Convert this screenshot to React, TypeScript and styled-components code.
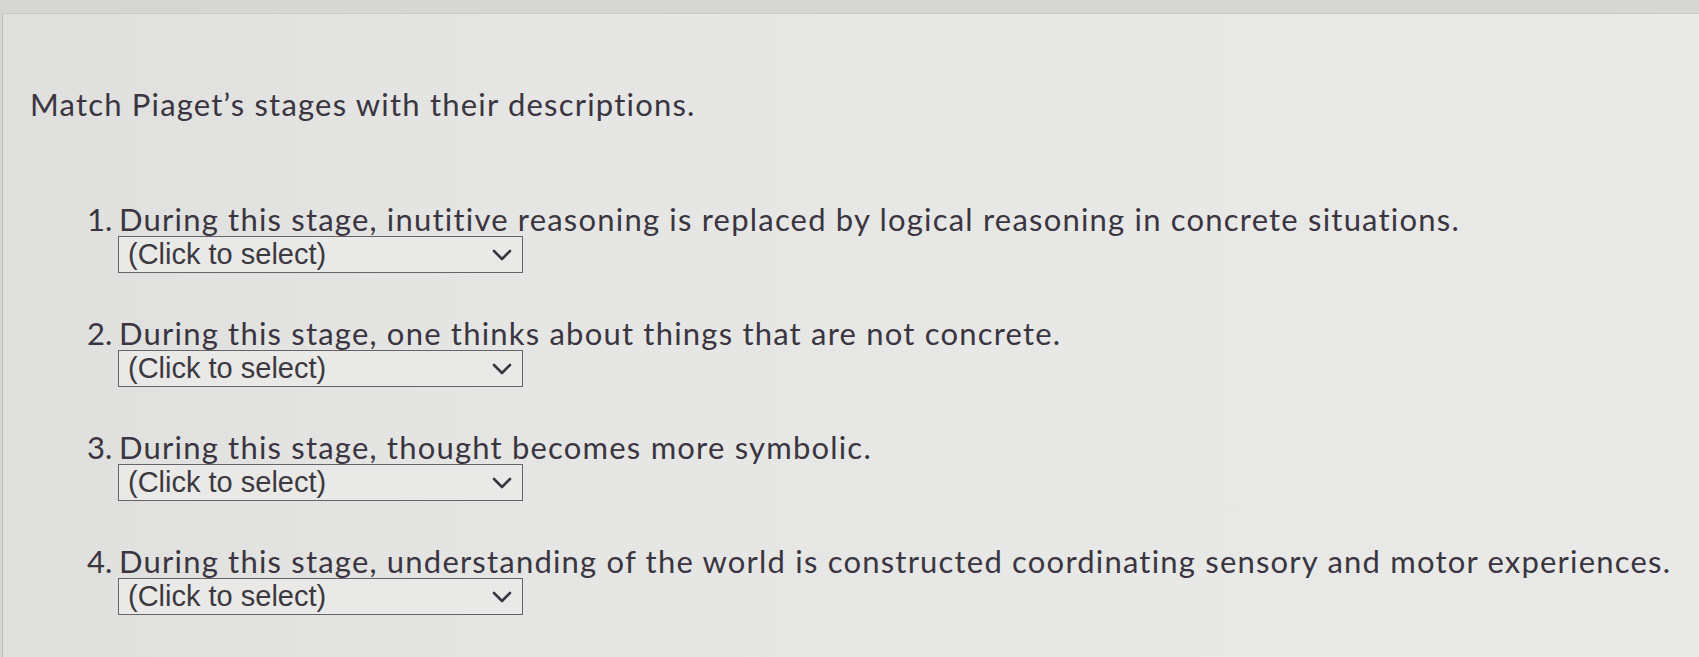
import React from 'react';
import styled, { createGlobalStyle } from 'styled-components';

const GlobalStyle = createGlobalStyle`
  html, body {
    margin: 0;
    padding: 0;
    background: #d6d6d4;
  }
`;

const Screen = styled.div`
  width: 1699px;
  height: 657px;
  padding-top: 13px;
  box-sizing: border-box;
  overflow: hidden;
`;

const Panel = styled.div`
  height: 100%;
  margin-left: 2px;
  box-sizing: border-box;
  border-top: 1px solid #c9c9c7;
  border-left: 1px solid #bdbdbb;
  background: linear-gradient(90deg, #dfdfdd 0%, #e5e5e3 30%, #e8e8e6 70%, #e9e9e7 100%);
  padding: 73px 0 0 27px;
  font-family: Lato, "Open Sans", sans-serif;
  font-size: 31px;
  line-height: 34px;
  letter-spacing: 1.2px;
  color: #3a3541;
`;

const Prompt = styled.div`
  margin-bottom: 81px;
`;

const List = styled.div`
  display: flex;
  flex-direction: column;
  gap: 43px;
  padding-left: 57px;
`;

const Item = styled.div`
  display: flex;
`;

const Num = styled.div`
  width: 32px;
  flex: none;
  box-sizing: border-box;
  padding-right: 9px;
  text-align: right;
  letter-spacing: 0;
`;

const Body = styled.div`
  display: flex;
  flex-direction: column;
  align-items: flex-start;
`;

const Statement = styled.div`
  white-space: nowrap;
`;

const Picker = styled.div`
  width: 405px;
  height: 37px;
  margin-left: -1px;
  box-sizing: border-box;
  border: 1px solid #66636b;
  background: #e9e9e7;
  display: flex;
  align-items: center;
  justify-content: space-between;
  padding: 0 10px 0 9px;
  font-family: "Liberation Sans", Arial, sans-serif;
  font-size: 29px;
  line-height: 35px;
  letter-spacing: 0;
  color: #3c3940;
  cursor: pointer;
`;

const Chevron = () => (
  <svg width="20" height="12" viewBox="0 0 20 12" fill="none">
    <path d="M2 2 L10 10 L18 2" stroke="#3a3541" strokeWidth="2.6" strokeLinecap="round" strokeLinejoin="round" />
  </svg>
);

const stages = [
  'During this stage, inutitive reasoning is replaced by logical reasoning in concrete situations.',
  'During this stage, one thinks about things that are not concrete.',
  'During this stage, thought becomes more symbolic.',
  'During this stage, understanding of the world is constructed coordinating sensory and motor experiences.',
];

export default function App() {
  return (
    <Screen>
      <GlobalStyle />
      <Panel>
        <Prompt>Match Piaget’s stages with their descriptions.</Prompt>
        <List>
          {stages.map((text, i) => (
            <Item key={i}>
              <Num>{i + 1}.</Num>
              <Body>
                <Statement>{text}</Statement>
                <Picker>
                  <span>(Click to select)</span>
                  <Chevron />
                </Picker>
              </Body>
            </Item>
          ))}
        </List>
      </Panel>
    </Screen>
  );
}
